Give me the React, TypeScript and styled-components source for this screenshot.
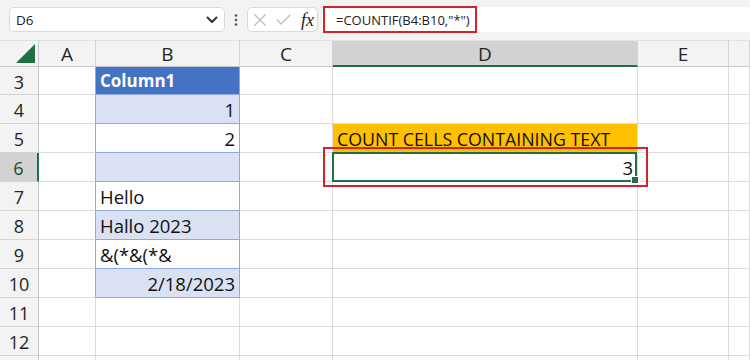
import styled, { createGlobalStyle } from 'styled-components';

const GlobalStyle = createGlobalStyle`
  html, body {
    margin: 0;
    padding: 0;
    background: #ffffff;
  }
  body {
    width: 750px;
    height: 360px;
    overflow: hidden;
    font-family: "Open Sans", "Noto Sans", sans-serif;
  }
`;

const GRID = '#dcdcdc';
const TABLE_LINE = '#8ea9db';
const BAND = '#d9e1f2';
const GREEN = '#1e7145';

const Window = styled.div`
  width: 750px;
  height: 360px;
  overflow: hidden;
  display: flex;
  flex-direction: column;
`;

const FormulaRow = styled.div`
  height: 40px;
  flex-shrink: 0;
  box-sizing: border-box;
  display: flex;
  align-items: flex-start;
  padding: 7px 0 0 9px;
  background: #f3f3f3;
`;

const NameBox = styled.div`
  width: 216px;
  height: 25px;
  box-sizing: border-box;
  display: flex;
  align-items: center;
  justify-content: space-between;
  padding: 0 6px 0 6px;
  background: #ffffff;
  border: 1px solid #d9d9d9;
  border-radius: 5px;
  font-size: 13.5px;
  color: #222;
`;

const Dots = styled.div`
  width: 22px;
  height: 25px;
  display: flex;
  align-items: center;
  justify-content: center;
`;

const FxBox = styled.div`
  width: 71px;
  height: 25px;
  box-sizing: border-box;
  display: flex;
  align-items: center;
  gap: 10px;
  padding: 0 3px 0 6px;
  background: #ffffff;
  border: 1px solid #d9d9d9;
  border-radius: 5px;
`;

const Fx = styled.span`
  font-family: "Liberation Serif", "DejaVu Serif", serif;
  font-style: italic;
  font-size: 18px;
  color: #222;
  line-height: 1;
`;

const FormulaBar = styled.div`
  flex: 1;
  height: 25px;
  margin-left: 4px;
  display: flex;
  align-items: center;
  background: #ffffff;
`;

const FormulaHighlight = styled.div`
  height: 27px;
  box-sizing: border-box;
  margin-left: 1px;
  display: flex;
  align-items: center;
  padding: 0 5px 0 11px;
  border: 2px solid #d3222a;
  font-size: 13px;
  color: #222;
`;

const Sheet = styled.div`
  display: grid;
  grid-template-columns: 39px 57px 144px 93px 305px 91px 1fr;
  grid-template-rows: 27px 28px repeat(10, 29px);
`;

const Corner = styled.div`
  box-sizing: border-box;
  display: flex;
  align-items: flex-end;
  justify-content: flex-end;
  padding: 0 3px 3px 0;
  background: #f3f3f3;
  border-top: 1px solid #e2e2e2;
  border-right: 1px solid #c8c8c8;
  border-bottom: 1px solid #c8c8c8;
`;

const ColHead = styled.div<{ $active?: boolean }>`
  box-sizing: border-box;
  display: flex;
  align-items: center;
  justify-content: center;
  background: ${(p) => (p.$active ? '#d2d2d2' : '#f3f3f3')};
  border-top: 1px solid #e2e2e2;
  border-right: 1px solid #d4d4d4;
  border-bottom: ${(p) => (p.$active ? `2px solid ${GREEN}` : '1px solid #c8c8c8')};
  font-size: 19px;
  color: #262626;
  padding-top: 1px;
`;

const RowHead = styled.div<{ $active?: boolean }>`
  box-sizing: border-box;
  display: flex;
  align-items: center;
  justify-content: center;
  padding-top: 2px;
  background: ${(p) => (p.$active ? '#d2d2d2' : '#f3f3f3')};
  border-right: ${(p) => (p.$active ? `2px solid ${GREEN}` : '1px solid #c8c8c8')};
  border-bottom: 1px solid #d4d4d4;
  font-size: 18px;
  color: ${(p) => (p.$active ? '#1d4d2e' : '#262626')};
`;

const Cell = styled.div<{
  $fill?: string;
  $align?: 'left' | 'right';
  $bold?: boolean;
  $color?: string;
  $right?: string;
  $bottom?: string;
  $size?: number;
}>`
  position: relative;
  box-sizing: border-box;
  min-width: 0;
  display: flex;
  align-items: flex-end;
  justify-content: ${(p) => (p.$align === 'right' ? 'flex-end' : 'flex-start')};
  padding: 0 4px 2px 4px;
  background: ${(p) => p.$fill || '#ffffff'};
  border-right: 1px solid ${(p) => p.$right || GRID};
  border-bottom: 1px solid ${(p) => p.$bottom || GRID};
  font-size: ${(p) => p.$size || 18.5}px;
  font-weight: ${(p) => (p.$bold ? 700 : 400)};
  color: ${(p) => p.$color || '#111'};
  line-height: 22px;
  white-space: nowrap;
  overflow: visible;
`;

const Selection = styled.div`
  position: absolute;
  top: -1px;
  left: -1px;
  right: 0;
  bottom: -1px;
  border: 2px solid ${GREEN};
  z-index: 3;
  pointer-events: none;
`;

const FillHandle = styled.div`
  position: absolute;
  right: -4px;
  bottom: -4px;
  width: 6px;
  height: 6px;
  background: ${GREEN};
  border: 1px solid #ffffff;
`;

const Callout = styled.div`
  position: absolute;
  top: -6px;
  left: -10px;
  right: -11px;
  bottom: -6px;
  border: 2px solid #d3222a;
  z-index: 4;
  pointer-events: none;
`;

type CellSpec = {
  text?: string;
  align?: 'left' | 'right';
  fill?: string;
  bold?: boolean;
  color?: string;
  right?: string;
  bottom?: string;
  size?: number;
  selected?: boolean;
};

const COLUMNS = ['A', 'B', 'C', 'D', 'E', 'F'];
const ROWS = [3, 4, 5, 6, 7, 8, 9, 10, 11, 12, 13];

const tableB: Record<number, CellSpec> = {
  3: { text: 'Column1', fill: '#4472c4', bold: true, color: '#ffffff', size: 17 },
  4: { text: '1', align: 'right', fill: BAND },
  5: { text: '2', align: 'right' },
  6: { fill: BAND },
  7: { text: 'Hello' },
  8: { text: 'Hallo 2023', fill: BAND },
  9: { text: '&(*&(*&' },
  10: { text: '2/18/2023', align: 'right', fill: BAND },
};

function specFor(row: number, col: string): CellSpec {
  const inTable = row >= 3 && row <= 10;
  if (col === 'A' && inTable) return { right: TABLE_LINE };
  if (col === 'B' && inTable) return { ...tableB[row], right: TABLE_LINE, bottom: TABLE_LINE };
  if (col === 'D' && row === 5)
    return { text: 'COUNT CELLS CONTAINING TEXT', fill: '#ffc000', size: 17.8 };
  if (col === 'D' && row === 6) return { text: '3', align: 'right', selected: true };
  return {};
}

function ChevronIcon() {
  return (
    <svg width="12" height="8" viewBox="0 0 12 8">
      <path d="M1.5 1.5 L6 6 L10.5 1.5" fill="none" stroke="#333" strokeWidth="2" strokeLinecap="round" strokeLinejoin="round" />
    </svg>
  );
}

function DotsIcon() {
  return (
    <svg width="4" height="14" viewBox="0 0 4 14">
      <circle cx="2" cy="2.5" r="1.3" fill="#555" />
      <circle cx="2" cy="7" r="1.3" fill="#555" />
      <circle cx="2" cy="11.5" r="1.3" fill="#555" />
    </svg>
  );
}

function CancelIcon() {
  return (
    <svg width="12" height="12" viewBox="0 0 12 12">
      <path d="M0.5 0.5 L11.5 11.5 M11.5 0.5 L0.5 11.5" stroke="#bdbdbd" strokeWidth="1.3" fill="none" />
    </svg>
  );
}

function EnterIcon() {
  return (
    <svg width="15" height="11" viewBox="0 0 15 11">
      <path d="M0.7 5.5 L5 10 L14.3 0.7" stroke="#bdbdbd" strokeWidth="1.3" fill="none" />
    </svg>
  );
}

function CornerTriangle() {
  return (
    <svg width="19" height="19" viewBox="0 0 19 19">
      <polygon points="19,0 19,19 0,19" fill={GREEN} />
    </svg>
  );
}

export default function App() {
  return (
    <Window>
      <GlobalStyle />
      <FormulaRow>
        <NameBox>
          <span>D6</span>
          <ChevronIcon />
        </NameBox>
        <Dots>
          <DotsIcon />
        </Dots>
        <FxBox>
          <CancelIcon />
          <EnterIcon />
          <Fx>fx</Fx>
        </FxBox>
        <FormulaBar>
          <FormulaHighlight>=COUNTIF(B4:B10,"*")</FormulaHighlight>
        </FormulaBar>
      </FormulaRow>

      <Sheet>
        <Corner>
          <CornerTriangle />
        </Corner>
        {COLUMNS.map((c) => (
          <ColHead key={c} $active={c === 'D'}>
            {c === 'F' ? '' : c}
          </ColHead>
        ))}

        {ROWS.map((r) => [
          <RowHead key={`h${r}`} $active={r === 6}>
            {r < 13 ? r : ''}
          </RowHead>,
          ...COLUMNS.map((c) => {
            const s = specFor(r, c);
            return (
              <Cell
                key={`${c}${r}`}
                $fill={s.fill}
                $align={s.align}
                $bold={s.bold}
                $color={s.color}
                $right={s.right}
                $bottom={s.bottom}
                $size={s.size}
              >
                {s.text}
                {s.selected && (
                  <>
                    <Selection>
                      <FillHandle />
                    </Selection>
                    <Callout />
                  </>
                )}
              </Cell>
            );
          }),
        ])}
      </Sheet>
    </Window>
  );
}
